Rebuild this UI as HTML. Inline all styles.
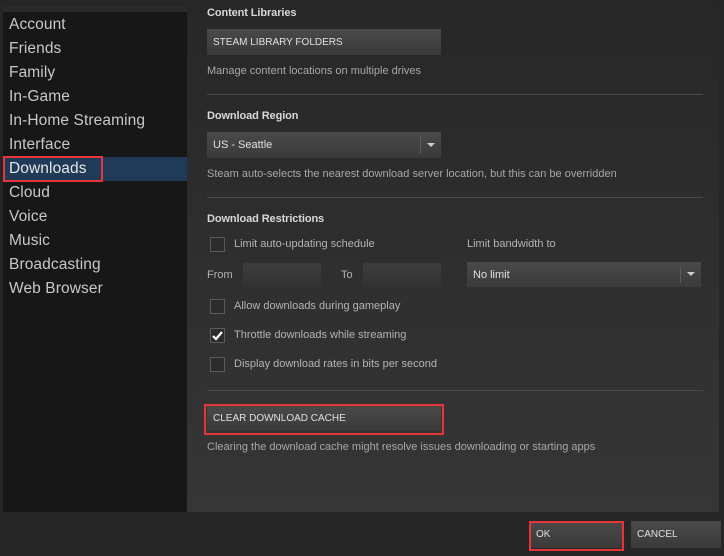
<!DOCTYPE html>
<html><head><style>
*{margin:0;padding:0;box-sizing:border-box}
body{width:724px;height:556px;background:#262626;font-family:"Liberation Sans",Arial,sans-serif;position:relative;overflow:hidden}
.a{position:absolute}
#side{left:3px;top:6px;width:184px;height:506px;background:#171717}
#side .bar{position:absolute;left:0;top:0;width:184px;height:6px;background:#2a2a2a}
.it{position:absolute;left:6px;font-size:15.5px;color:#c8c8c8;line-height:24px;letter-spacing:0.1px}
#content{left:187px;top:0;width:532px;height:512px;background:linear-gradient(#272727,#363636)}
.lbl{position:absolute;font-size:11px;color:#d8d8d8;font-weight:bold;letter-spacing:-0.1px}
.txt{position:absolute;font-size:11px;color:#a8a8a8}
.btn{position:absolute;background:linear-gradient(#4a4a4a,#3a3a3a);color:#e0e0e0;font-size:10px;padding-left:6px;display:flex;align-items:center}
.sep{position:absolute;left:207px;width:496px;height:1px;background:#4a4a4a}
.cb{position:absolute;left:210px;width:15px;height:15px;border:1px solid #5a5a5a;background:#2c2c2c}
.inp{position:absolute;background:linear-gradient(#3c3c3c,#333);height:24px}
.red{position:absolute;border:2px solid #e8353a}
</style></head><body>
<div id="side" class="a"><div class="bar"></div>
<div class="a" style="left:0;top:151px;width:184px;height:24px;background:#1f3b57"></div>
<div class="it" style="top:7px">Account</div>
<div class="it" style="top:31px">Friends</div>
<div class="it" style="top:55px">Family</div>
<div class="it" style="top:79px">In-Game</div>
<div class="it" style="top:103px">In-Home Streaming</div>
<div class="it" style="top:127px">Interface</div>
<div class="it" style="top:151px;color:#e6e6e6">Downloads</div>
<div class="it" style="top:175px">Cloud</div>
<div class="it" style="top:199px">Voice</div>
<div class="it" style="top:223px">Music</div>
<div class="it" style="top:247px">Broadcasting</div>
<div class="it" style="top:271px">Web Browser</div>
</div>
<div class="red" style="left:3px;top:156px;width:100px;height:26px"></div>
<div id="content" class="a"></div>
<div class="lbl" style="left:207px;top:7px">Content Libraries</div>
<div class="btn" style="left:207px;top:29px;width:234px;height:26px">STEAM LIBRARY FOLDERS</div>
<div class="txt" style="left:207px;top:65px">Manage content locations on multiple drives</div>
<div class="sep" style="top:94px"></div>
<div class="lbl" style="left:207px;top:110px">Download Region</div>
<div class="btn" style="left:207px;top:132px;width:234px;height:26px;font-size:11px">US - Seattle
<div class="a" style="left:213px;top:4px;width:1px;height:18px;background:#5a5a5a"></div>
<div class="a" style="left:220px;top:11px;border-left:4px solid transparent;border-right:4px solid transparent;border-top:4px solid #ccc"></div></div>
<div class="txt" style="left:207px;top:168px">Steam auto-selects the nearest download server location, but this can be overridden</div>
<div class="sep" style="top:197px"></div>
<div class="lbl" style="left:207px;top:213px">Download Restrictions</div>
<div class="cb" style="top:237px"></div>
<div class="txt" style="left:234px;top:238px;color:#b4b4b4">Limit auto-updating schedule</div>
<div class="txt" style="left:467px;top:238px;color:#b4b4b4">Limit bandwidth to</div>
<div class="txt" style="left:207px;top:269px;color:#b4b4b4">From</div>
<div class="inp" style="left:243px;top:263px;width:78px"></div>
<div class="txt" style="left:341px;top:269px;color:#b4b4b4">To</div>
<div class="inp" style="left:363px;top:263px;width:78px"></div>
<div class="btn" style="left:467px;top:262px;width:234px;height:25px;font-size:11px">No limit
<div class="a" style="left:213px;top:4px;width:1px;height:17px;background:#5a5a5a"></div>
<div class="a" style="left:220px;top:10px;border-left:4px solid transparent;border-right:4px solid transparent;border-top:4px solid #ccc"></div></div>
<div class="cb" style="top:299px"></div>
<div class="txt" style="left:234px;top:300px;color:#b4b4b4">Allow downloads during gameplay</div>
<div class="cb" style="top:328px"><svg width="13" height="13" viewBox="0 0 13 13" style="position:absolute;left:0;top:0"><path d="M2 7 L5 10 L11 3" stroke="#fff" stroke-width="2.2" fill="none"/></svg></div>
<div class="txt" style="left:234px;top:329px;color:#b4b4b4">Throttle downloads while streaming</div>
<div class="cb" style="top:357px"></div>
<div class="txt" style="left:234px;top:358px;color:#b4b4b4">Display download rates in bits per second</div>
<div class="sep" style="top:390px"></div>
<div class="btn" style="left:207px;top:405px;width:234px;height:26px">CLEAR DOWNLOAD CACHE</div>
<div class="red" style="left:204px;top:404px;width:240px;height:31px"></div>
<div class="txt" style="left:207px;top:441px">Clearing the download cache might resolve issues downloading or starting apps</div>
<div class="btn" style="left:530px;top:521px;width:92px;height:27px">OK</div>
<div class="red" style="left:529px;top:521px;width:95px;height:30px"></div>
<div class="btn" style="left:631px;top:521px;width:90px;height:27px">CANCEL</div>
</body></html>
